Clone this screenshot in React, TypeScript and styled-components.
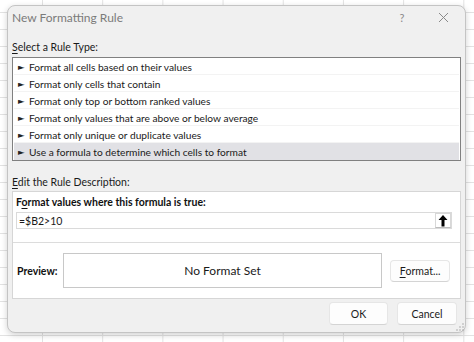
import React from "react";
import styled, { createGlobalStyle } from "styled-components";

const GlobalStyle = createGlobalStyle`
  html, body {
    margin: 0;
    padding: 0;
  }
  body {
    width: 474px;
    height: 342px;
    overflow: hidden;
    background-color: #ffffff;
    background-image:
      linear-gradient(to right, #e2e2e2 1px, transparent 1px),
      linear-gradient(to bottom, #e2e2e2 1px, transparent 1px);
    background-size: 60.2px 100%, 100% 17px;
    background-position: 42px 0, 0 12px;
    font-family: Lato, "Noto Sans", sans-serif;
  }
`;

const rules = [
  "Format all cells based on their values",
  "Format only cells that contain",
  "Format only top or bottom ranked values",
  "Format only values that are above or below average",
  "Format only unique or duplicate values",
  "Use a formula to determine which cells to format",
];

export default function App() {
  return (
    <>
      <GlobalStyle />
      <Page>
        <Dialog>
          <TitleBar>
            <Title>New Formatting Rule</Title>
            <TitleButtons>
              <Help>?</Help>
              <Close>
                <svg width="11" height="11" viewBox="0 0 11 11">
                  <path d="M1 1L10 10M10 1L1 10" stroke="#8a8a8a" strokeWidth="1" />
                </svg>
              </Close>
            </TitleButtons>
          </TitleBar>
          <Body>
            <Label $top={10}>
              <u>S</u>elect a Rule Type:
            </Label>
            <RuleList>
              {rules.map((r, i) => (
                <RuleRow key={r} $selected={i === rules.length - 1} $last={i === rules.length - 1}>
                  <Pointer>►</Pointer>
                  {r}
                </RuleRow>
              ))}
            </RuleList>
            <Label $top={13}>
              <u>E</u>dit the Rule Description:
            </Label>
            <Panel>
              <FormulaSection>
                <Bold>
                  F<u>o</u>rmat values where this formula is true:
                </Bold>
                <FormulaInput>
                  <span>=$B2&gt;10</span>
                  <RefButton>
                    <svg width="12" height="14" viewBox="0 0 12 14">
                      <path d="M6 1L1.5 6H4.5V12.5H7.5V6H10.5Z" fill="#000" />
                    </svg>
                  </RefButton>
                </FormulaInput>
              </FormulaSection>
              <PreviewSection>
                <PreviewLabel>Preview:</PreviewLabel>
                <PreviewBox>No Format Set</PreviewBox>
                <Button $width={60} $height={22}>
                  <u>F</u>ormat...
                </Button>
              </PreviewSection>
            </Panel>
            <Footer>
              <Button $width={59} $height={23}>OK</Button>
              <Button $width={60} $height={23}>Cancel</Button>
            </Footer>
          </Body>
          <Grip>
            <svg width="8" height="8" viewBox="0 0 8 8">
              <circle cx="7" cy="1" r="0.7" fill="#9a9a9a" />
              <circle cx="4" cy="4" r="0.7" fill="#9a9a9a" />
              <circle cx="7" cy="4" r="0.7" fill="#9a9a9a" />
              <circle cx="1" cy="7" r="0.7" fill="#9a9a9a" />
              <circle cx="4" cy="7" r="0.7" fill="#9a9a9a" />
              <circle cx="7" cy="7" r="0.7" fill="#9a9a9a" />
            </svg>
          </Grip>
        </Dialog>
      </Page>
    </>
  );
}

const Page = styled.div`
  padding: 5px 0 0 7px;
`;

const Dialog = styled.div`
  position: relative;
  box-sizing: border-box;
  width: 459px;
  height: 328px;
  background: #f0f0f0;
  border: 1px solid #c4c4c4;
  border-radius: 8px;
  box-shadow: 0 2px 6px rgba(0, 0, 0, 0.18);
  display: flex;
  flex-direction: column;
  font-size: 10px;
  color: #1a1a1a;
`;

const TitleBar = styled.div`
  height: 23px;
  display: flex;
  align-items: center;
  justify-content: space-between;
  padding: 0 0 0 4px;
`;

const Title = styled.div`
  font-size: 12px;
  color: #7b7b7b;
`;

const TitleButtons = styled.div`
  display: flex;
  align-items: center;
`;

const Help = styled.div`
  width: 40px;
  text-align: center;
  color: #8a8a8a;
  font-size: 11px;
`;

const Close = styled.div`
  width: 42px;
  display: flex;
  justify-content: center;
  margin-right: 1px;
`;

const Body = styled.div`
  padding: 0 4px 0 4px;
  display: flex;
  flex-direction: column;
`;

const Label = styled.div<{ $top: number }>`
  margin-top: ${(p) => p.$top}px;
  height: 17px;
  line-height: 17px;
  font-size: 10.5px;
  color: #1a1a1a;
  u {
    text-decoration-thickness: 1px;
    text-underline-offset: 2px;
  }
`;

const RuleList = styled.div`
  margin-top: 1px;
  height: 104px;
  box-sizing: border-box;
  border: 1px solid #808080;
  background: #ffffff;
  padding: 0 1px;
`;

const RuleRow = styled.div<{ $selected: boolean; $last: boolean }>`
  height: 17px;
  box-sizing: border-box;
  display: flex;
  align-items: center;
  padding: 1px 0 0 4px;
  background: ${(p) => (p.$selected ? "#e1e1e5" : "transparent")};
  border-bottom: ${(p) => (p.$last ? "none" : "1px solid #f3f3f3")};
  font-size: 10.2px;
  color: #1a1a1a;
`;

const Pointer = styled.span`
  font-size: 8.5px;
  width: 11px;
  color: #222;
  font-family: "DejaVu Sans", sans-serif;
`;

const Panel = styled.div`
  margin-top: 0;
  height: 108px;
  box-sizing: border-box;
  background: #ffffff;
  border: 1px solid #d6d6d6;
  display: flex;
  flex-direction: column;
`;

const FormulaSection = styled.div`
  height: 51px;
  box-sizing: border-box;
  border-bottom: 1px solid #dcdcdc;
  padding: 3px 8px 0 3px;
`;

const Bold = styled.div`
  font-weight: 700;
  font-size: 10.5px;
  height: 15px;
  line-height: 15px;
  color: #111;
  u {
    text-decoration-thickness: 1px;
    text-underline-offset: 2px;
  }
`;

const FormulaInput = styled.div`
  margin-top: 2px;
  height: 17px;
  box-sizing: border-box;
  border: 1px solid #dadada;
  display: flex;
  align-items: center;
  justify-content: space-between;
  padding-left: 2px;
  font-size: 10.5px;
`;

const RefButton = styled.div`
  width: 16px;
  height: 15px;
  box-sizing: border-box;
  border: 1px solid #d8d8d8;
  border-bottom-color: #bcbcbc;
  display: flex;
  align-items: center;
  justify-content: center;
`;

const PreviewSection = styled.div`
  flex: 1;
  display: flex;
  align-items: center;
  padding: 0 9px 0 4px;
`;

const PreviewLabel = styled.div`
  width: 46px;
  font-weight: 700;
  font-size: 10.5px;
  color: #111;
`;

const PreviewBox = styled.div`
  width: 319px;
  height: 35px;
  box-sizing: border-box;
  border: 1px solid #c8c8c8;
  display: flex;
  align-items: center;
  justify-content: center;
  font-size: 12px;
  color: #1a1a1a;
  margin-right: 8px;
`;

const Button = styled.div<{ $width: number; $height: number }>`
  width: ${(p) => p.$width}px;
  height: ${(p) => p.$height}px;
  box-sizing: border-box;
  background: #fdfdfd;
  border: 1px solid #e6e6e6;
  border-bottom-color: #d4d4d4;
  border-radius: 4px;
  display: flex;
  align-items: center;
  justify-content: center;
  font-size: 10.5px;
  color: #1a1a1a;
  u {
    text-decoration-thickness: 1px;
    text-underline-offset: 2px;
  }
`;

const Footer = styled.div`
  margin-top: 3px;
  display: flex;
  justify-content: flex-end;
  gap: 9px;
  padding-right: 4px;
`;

const Grip = styled.div`
  position: absolute;
  right: 1px;
  bottom: 1px;
  line-height: 0;
`;
